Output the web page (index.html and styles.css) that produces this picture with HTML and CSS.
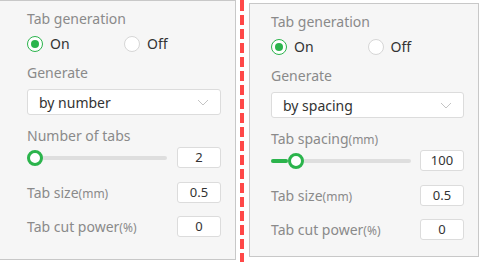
FILE: index.html
```html
<!DOCTYPE html>
<html>
<head>
<meta charset="utf-8">
<link rel="stylesheet" href="styles.css">
</head>
<body>
<div class="page">
  <section class="panel panel-left">
    <div class="label">Tab generation</div>
    <div class="radios">
      <label class="radio checked"><span class="dot"></span>On</label>
      <label class="radio"><span class="dot"></span>Off</label>
    </div>
    <div class="label gap-gen">Generate</div>
    <div class="select"><span>by number</span>
      <svg class="chev" width="12" height="7" viewBox="0 0 12 7"><path d="M1 1l5 5 5-5" fill="none" stroke="#c4c4c4" stroke-width="1"/></svg>
    </div>
    <div class="label gap-sub">Number of tabs</div>
    <div class="row slider-row">
      <div class="slider"><div class="fill" style="width:0px"></div><div class="knob" style="left:0px"></div></div>
      <div class="input">2</div>
    </div>
    <div class="row field r1"><span class="label">Tab size<small>(mm)</small></span><div class="input">0.5</div></div>
    <div class="row field r2"><span class="label">Tab cut power<small>(%)</small></span><div class="input">0</div></div>
  </section>
  <div class="divider"></div>
  <section class="panel panel-right">
    <div class="label">Tab generation</div>
    <div class="radios">
      <label class="radio checked"><span class="dot"></span>On</label>
      <label class="radio"><span class="dot"></span>Off</label>
    </div>
    <div class="label gap-gen">Generate</div>
    <div class="select"><span>by spacing</span>
      <svg class="chev" width="12" height="7" viewBox="0 0 12 7"><path d="M1 1l5 5 5-5" fill="none" stroke="#c4c4c4" stroke-width="1"/></svg>
    </div>
    <div class="label gap-sub">Tab spacing<small>(mm)</small></div>
    <div class="row slider-row">
      <div class="slider"><div class="fill" style="width:17px"></div><div class="knob" style="left:17px"></div></div>
      <div class="input">100</div>
    </div>
    <div class="row field r1"><span class="label">Tab size<small>(mm)</small></span><div class="input">0.5</div></div>
    <div class="row field r2"><span class="label">Tab cut power<small>(%)</small></span><div class="input">0</div></div>
  </section>
</div>
</body>
</html>
```
FILE: styles.css
```css
html, body {
  margin: 0;
  padding: 0;
  background: #ffffff;
}
body {
  font-family: "Noto Sans", "Open Sans", sans-serif;
  font-size: 14px;
  color: #333;
  width: 479px;
  height: 262px;
  overflow: hidden;
}
.page {
  display: flex;
  align-items: flex-start;
}
.panel {
  box-sizing: border-box;
  background: #f6f6f6;
  border: 1px solid #c8c8c8;
  padding: 8px 14px 0 21px;
  display: flex;
  flex-direction: column;
}
.panel-left {
  width: 236px;
  height: 260px;
  border-left: none;
  padding-left: 27px;
}
.panel-right {
  width: 230px;
  height: 254px;
  margin-top: 3px;
  margin-left: 5px;
}
.divider {
  width: 4px;
  height: 262px;
  margin-left: 4px;
  background: repeating-linear-gradient(to bottom, #ff4848 0, #ff4848 10px, transparent 10px, transparent 14px);
  background-position: 0 1px;
}
.label {
  color: #8a8a8a;
  line-height: 20px;
  height: 20px;
  white-space: nowrap;
}
.label small {
  font-size: 12px;
}
.radios {
  display: flex;
  margin-top: 5px;
  height: 20px;
  align-items: center;
}
.radio {
  display: flex;
  align-items: center;
  color: #333;
  width: 101px;
  line-height: 20px;
}
.dot {
  box-sizing: border-box;
  width: 16px;
  height: 16px;
  border-radius: 50%;
  border: 1px solid #d6d6d6;
  background: #fff;
  margin: 0 7px 0 0;
  position: relative;
}
.radio.checked .dot {
  border-color: #2bb44c;
}
.radio.checked .dot::after {
  content: "";
  position: absolute;
  left: 3px;
  top: 3px;
  width: 8px;
  height: 8px;
  border-radius: 50%;
  background: #2bb44c;
}
.gap-gen {
  margin-top: 9px;
}
.select {
  box-sizing: border-box;
  margin-top: 6px;
  height: 26px;
  border: 1px solid #dcdcdc;
  border-radius: 3px;
  background: #fff;
  display: flex;
  align-items: center;
  justify-content: space-between;
  padding: 0 11px 0 11px;
  color: #333;
}
.gap-sub {
  margin-top: 11px;
}
.row {
  display: flex;
  align-items: center;
  justify-content: space-between;
  height: 21px;
}
.slider-row {
  margin-top: 1px;
}
.slider {
  position: relative;
  width: 140px;
  height: 4px;
  border-radius: 2px;
  background: #dedede;
}
.fill {
  position: absolute;
  left: 0;
  top: 0;
  height: 4px;
  border-radius: 2px;
  background: #2bb44c;
}
.knob {
  position: absolute;
  top: -6px;
  box-sizing: border-box;
  width: 16px;
  height: 16px;
  border-radius: 50%;
  border: 3px solid #2bb44c;
  background: #fff;
}
.input {
  box-sizing: border-box;
  width: 44px;
  height: 21px;
  border: 1px solid #dcdcdc;
  border-radius: 3px;
  background: #fff;
  text-align: center;
  line-height: 19px;
  font-size: 13px;
  color: #333;
}
.r1 {
  margin-top: 14px;
}
.r2 {
  margin-top: 13px;
}
```
